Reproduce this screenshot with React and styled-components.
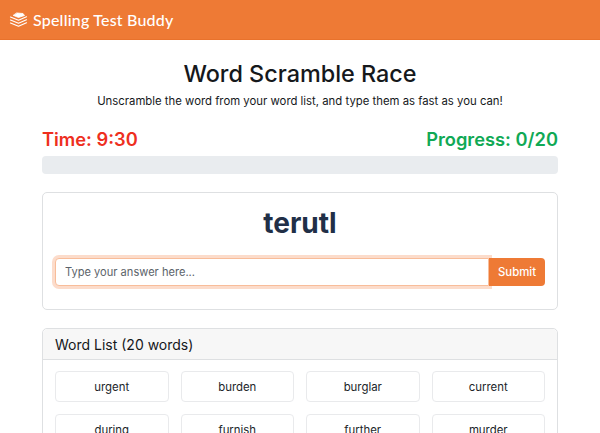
import React from 'react';
import styled, { createGlobalStyle } from 'styled-components';

const GlobalStyle = createGlobalStyle`
    html, body {
        margin: 0;
        height: 433px;
        overflow: hidden;
        background: #fff;
        font-family: Inter, "Liberation Sans", sans-serif;
        color: #212529;
    }
    * {
        box-sizing: border-box;
    }
`;

const Navbar = styled.nav`
    height: 40px;
    background: #ee7a35;
    border-bottom: 1px solid #e8722c;
    display: flex;
    align-items: center;
    padding-left: 9px;
    gap: 5px;
`;

const Brand = styled.span`
    color: #fff;
    font-family: Lato, sans-serif;
    font-size: 16px;
    font-weight: 500;
    letter-spacing: 0.2px;
`;

const Main = styled.main`
    padding: 19px 42px 0;
`;

const Title = styled.h1`
    margin: 0;
    text-align: center;
    font-size: 23.4px;
    line-height: 29px;
    font-weight: 500;
    color: #15181b;
`;

const Subtitle = styled.p`
    margin: 4px 0 0;
    text-align: center;
    font-size: 11.35px;
    line-height: 18px;
    color: #15181b;
`;

const Stats = styled.div`
    display: flex;
    justify-content: space-between;
    margin-top: 17px;
    font-size: 18.3px;
    line-height: 24px;
    font-weight: 600;
`;

const Stat = styled.span`
    color: ${props => props.$color};
`;

const ProgressTrack = styled.div`
    height: 18px;
    margin-top: 5px;
    border-radius: 4px;
    background: #e9ecef;
`;

const Card = styled.section`
    margin-top: 18px;
    border: 1px solid #dee0e2;
    border-radius: 5px;
    background: #fff;
`;

const GameBody = styled.div`
    height: 116px;
    padding: 10px 12px 0;
`;

const Scrambled = styled.div`
    text-align: center;
    font-size: 28px;
    line-height: 40px;
    font-weight: 700;
    color: #212f47;
`;

const AnswerRow = styled.div`
    display: flex;
    margin-top: 15px;
`;

const AnswerInput = styled.input`
    flex: 1;
    min-width: 0;
    height: 28px;
    padding: 0 9px;
    border: 1px solid #f8bd9a;
    border-radius: 4px 0 0 4px;
    outline: none;
    box-shadow: 0 0 0 3px #fcdccb;
    font-family: inherit;
    font-size: 11.1px;
    color: #212529;

    &::placeholder {
        color: #5c636a;
        opacity: 1;
    }
`;

const SubmitButton = styled.button`
    position: relative;
    width: 56px;
    height: 28px;
    padding: 0;
    border: none;
    border-radius: 0 4px 4px 0;
    background: #ee7a35;
    color: #fff;
    font-family: inherit;
    font-size: 11.4px;
    font-weight: 500;
`;

const CardHeader = styled.header`
    height: 31px;
    padding: 0 12px;
    display: flex;
    align-items: center;
    background: #f7f7f7;
    border-bottom: 1px solid #dee0e2;
    border-radius: 5px 5px 0 0;
    font-size: 14px;
    font-weight: 400;
    color: #15181b;
`;

const WordGrid = styled.div`
    display: grid;
    grid-template-columns: repeat(4, 1fr);
    gap: 12px;
    padding: 11px 12px;
`;

const WordCell = styled.div`
    height: 31px;
    display: flex;
    align-items: center;
    justify-content: center;
    border: 1px solid #e9eaec;
    border-radius: 4px;
    font-size: 11.4px;
`;

const words = ['urgent', 'burden', 'burglar', 'current', 'during', 'furnish', 'further', 'murder'];

const LogoIcon = () => (
    <svg width="19" height="15" viewBox="0 0 19 15" fill="none" stroke="#fff" strokeLinecap="round" strokeLinejoin="round">
        <path d="M8 1 14 1.5 15.5 3.5 9.5 5.5 4.5 3.5z" fill="#fff" strokeWidth="0.8" />
        <path d="M1.5 5 9.5 8.2 17.5 4.8" strokeWidth="1.2" />
        <path d="M1.5 8 9.5 11.2 17.5 7.8" strokeWidth="1.2" />
        <path d="M1.5 11 9.5 14.2 17.5 10.8" strokeWidth="1.2" />
    </svg>
);

const App = () => {
    return (
        <>
            <GlobalStyle />
            <Navbar>
                <LogoIcon />
                <Brand>Spelling Test Buddy</Brand>
            </Navbar>
            <Main>
                <Title>Word Scramble Race</Title>
                <Subtitle>Unscramble the word from your word list, and type them as fast as you can!</Subtitle>
                <Stats>
                    <Stat $color="#ee2f1e">Time: 9:30</Stat>
                    <Stat $color="#10a955">Progress: 0/20</Stat>
                </Stats>
                <ProgressTrack />
                <Card>
                    <GameBody>
                        <Scrambled>terutl</Scrambled>
                        <AnswerRow>
                            <AnswerInput placeholder="Type your answer here..." />
                            <SubmitButton>Submit</SubmitButton>
                        </AnswerRow>
                    </GameBody>
                </Card>
                <Card>
                    <CardHeader>Word List (20 words)</CardHeader>
                    <WordGrid>
                        {words.map(word => (
                            <WordCell key={word}>{word}</WordCell>
                        ))}
                    </WordGrid>
                </Card>
            </Main>
        </>
    );
};

export default App;
